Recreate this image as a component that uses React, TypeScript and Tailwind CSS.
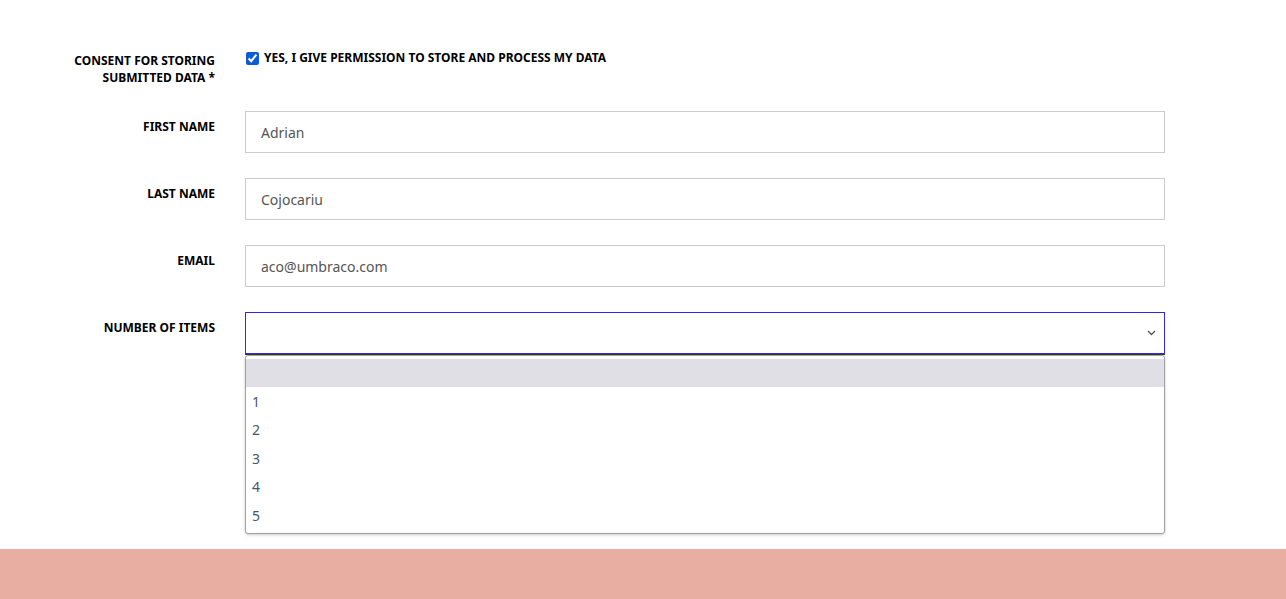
import React from 'react';

const fields = [
  { label: 'First name', value: 'Adrian' },
  { label: 'Last name', value: 'Cojocariu' },
  { label: 'Email', value: 'aco@umbraco.com' },
];

const options = ['', '1', '2', '3', '4', '5'];

function Label({ children }: { children: React.ReactNode }) {
  return (
    <div className="w-[215px] shrink-0 pt-[7px] text-right text-[12px] font-bold uppercase leading-[17px] text-black">
      {children}
    </div>
  );
}

export default function App() {
  return (
    <div className="min-h-[599px] bg-white font-['Noto_Sans',sans-serif]">
      <main className="h-[549px] pt-[50px]">
        {/* consent */}
        <div className="mb-[25px] flex h-[36px] gap-[30px]">
          <div className="w-[215px] shrink-0 pt-[2px] text-right text-[12px] font-bold uppercase leading-[17px] text-black">
            Consent for storing
            <br />
            submitted data *
          </div>
          <label className="flex items-start gap-[5px] pt-[1px]">
            <input
              type="checkbox"
              checked
              readOnly
              className="ml-px mt-px h-[13px] w-[13px] accent-[#0a5bd8]"
            />
            <span className="text-[12px] font-bold uppercase leading-[14px] text-black">
              Yes, I give permission to store and process my data
            </span>
          </label>
        </div>

        {fields.map((f) => (
          <div key={f.label} className="mb-[25px] flex gap-[30px]">
            <Label>{f.label}</Label>
            <div className="flex h-[42px] w-[920px] items-center border border-[#cccccc] px-[15px] text-[14px] text-[#555555]">
              {f.value}
            </div>
          </div>
        ))}

        <div className="flex gap-[30px]">
          <Label>Number of items</Label>
          <div className="relative w-[920px]">
            <div className="flex h-[42px] items-center justify-end border border-[#3328e8] px-[8px] shadow-[0_1px_0_#3a3a2a]">
              <svg width="9" height="6" viewBox="0 0 9 6" fill="none">
                <path d="M1 1l3.5 3.5L8 1" stroke="#555" strokeWidth="1.3" />
              </svg>
            </div>
            {/* open dropdown */}
            <div className="absolute left-0 top-[43px] z-10 w-[920px] rounded-[3px] border border-[#a0a0a0] bg-white pb-[4px] pt-[3px] shadow-[0_1px_3px_rgba(0,0,0,0.2)]">
              {options.map((o, i) => (
                <div
                  key={i}
                  className={`flex h-[28.4px] items-center px-[6px] text-[14px] text-[#46586b] ${
                    i === 0 ? 'bg-[#e0dfe5]' : ''
                  }`}
                >
                  {o}
                </div>
              ))}
            </div>
          </div>
        </div>
      </main>
      <footer className="h-[50px] bg-[#e7aea1]" />
    </div>
  );
}
